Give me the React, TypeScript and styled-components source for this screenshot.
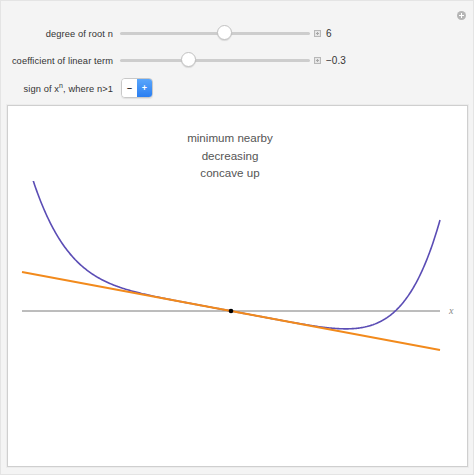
import { Fragment } from 'react';
import { createGlobalStyle, styled } from 'styled-components';

const GlobalStyle = createGlobalStyle`
  html, body {
    margin: 0;
    padding: 0;
    background: #f4f4f4;
  }
  body {
    font-family: "Liberation Sans", Arial, sans-serif;
  }
`;

const Frame = styled.div`
  position: relative;
  box-sizing: border-box;
  width: 474px;
  height: 475px;
  background: #f4f4f4;
  border: 1px solid #e4e4e4;
  padding: 19px 6px 0 6px;
`;

const AddButton = styled.div`
  position: absolute;
  top: 10px;
  right: 7px;
  width: 9px;
  height: 9px;
  border-radius: 50%;
  background: #b5b5b5;
  &::before,
  &::after {
    content: '';
    position: absolute;
    background: #fff;
  }
  &::before {
    left: 2px;
    top: 4px;
    width: 5px;
    height: 1px;
  }
  &::after {
    left: 4px;
    top: 2px;
    width: 1px;
    height: 5px;
  }
`;

const Controls = styled.div`
  display: grid;
  grid-template-columns: 106px auto;
  column-gap: 7px;
  grid-auto-rows: 27px;
  align-items: center;
  margin-bottom: 4px;
`;

const Label = styled.div`
  font-size: 9.3px;
  color: #333;
  text-align: right;
  white-space: nowrap;
  letter-spacing: 0.1px;
  sup {
    font-size: 7px;
    vertical-align: 4px;
  }
`;

const ControlCell = styled.div`
  display: flex;
  align-items: center;
`;

const Track = styled.div`
  position: relative;
  width: 190px;
  height: 3px;
  border-radius: 2px;
  background: #cdcdcd;
`;

const Thumb = styled.div`
  position: absolute;
  top: -7px;
  width: 15px;
  height: 15px;
  box-sizing: border-box;
  border-radius: 50%;
  background: #fff;
  border: 1px solid #c2c2c2;
  box-shadow: 0 1px 1px rgba(0, 0, 0, 0.12);
`;

const StepIcon = styled.div`
  position: relative;
  box-sizing: border-box;
  width: 7px;
  height: 7px;
  margin-left: 4px;
  border: 1px solid #b8b8b8;
  background: #e6e6e6;
  &::before,
  &::after {
    content: '';
    position: absolute;
    background: #a8a8a8;
  }
  &::before {
    left: 1px;
    top: 2px;
    width: 3px;
    height: 1px;
  }
  &::after {
    left: 2px;
    top: 1px;
    width: 1px;
    height: 3px;
  }
`;

const Value = styled.span`
  margin-left: 5px;
  font-size: 10px;
  color: #333;
`;

const Toggle = styled.div`
  display: flex;
  margin-left: 1px;
  height: 18px;
  border-radius: 4px;
  overflow: hidden;
  border: 1px solid #c8c8c8;
  box-shadow: 0 1px 1px rgba(0, 0, 0, 0.08);
`;

const ToggleButton = styled.div<{ $active?: boolean }>`
  width: 15px;
  display: flex;
  align-items: center;
  justify-content: center;
  font-size: 9px;
  font-weight: bold;
  color: ${(p) => (p.$active ? '#fff' : '#333')};
  background: ${(p) =>
    p.$active ? 'linear-gradient(#5aa6fb, #2a7ef1)' : '#fff'};
`;

const PlotBox = styled.div`
  box-sizing: border-box;
  width: 461px;
  height: 362px;
  background: #fff;
  border: 1px solid #cfcfcf;
  box-shadow: 0 0 0 1px #ececec;
`;

const PlotSvg = styled.svg`
  display: block;
`;

const sliders = [
  { label: 'degree of root n', value: 6, min: 1, max: 10, shown: '6' },
  { label: 'coefficient of linear term', value: -0.3, min: -1, max: 1, shown: '\u22120.3' },
];

const n = 6;
const c = -0.3;
const toPx = (x: number) => 231 + 209 * x;
const toPy = (y: number) => 311 - 130 * y;

const curvePath = () => {
  const pts: string[] = [];
  for (let i = 0; i <= 400; i++) {
    const x = -1 + (2 * i) / 400;
    const y = Math.pow(x, n) + c * x;
    pts.push(`${toPx(x).toFixed(2)},${toPy(y).toFixed(2)}`);
  }
  return 'M' + pts.join(' L');
};

const Plot = () => (
  <PlotBox>
    <PlotSvg width={459} height={360} viewBox="8 106 459 360">
      <defs>
        <clipPath id="range">
          <rect x={8} y={toPy(1.0)} width={459} height={360} />
        </clipPath>
      </defs>
      <g fontFamily="'Liberation Sans', Arial, sans-serif" fontSize={11.6} fill="#555" textAnchor="middle">
        <text x={230} y={142}>minimum nearby</text>
        <text x={230} y={159.5}>decreasing</text>
        <text x={230} y={177}>concave up</text>
      </g>
      <line x1={22} y1={311} x2={440} y2={311} stroke="#7a7a7a" strokeWidth={1} />
      <text x={449} y={314} fontFamily="'Liberation Serif', serif" fontStyle="italic" fontSize={10} fill="#888">
        x
      </text>
      <path d={curvePath()} fill="none" stroke="#5b4db5" strokeWidth={1.6} clipPath="url(#range)" />
      <line x1={toPx(-1)} y1={toPy(-c)} x2={toPx(1)} y2={toPy(c)} stroke="#f28a1c" strokeWidth={2} />
      <circle cx={231} cy={311} r={2.3} fill="#000" />
    </PlotSvg>
  </PlotBox>
);

export default function App() {
  return (
    <>
      <GlobalStyle />
      <Frame>
        <AddButton />
        <Controls>
          {sliders.map((s) => (
            <Fragment key={s.label}>
              <Label>{s.label}</Label>
              <ControlCell>
                <Track>
                  <Thumb style={{ left: ((s.value - s.min) / (s.max - s.min)) * (190 - 15) }} />
                </Track>
                <StepIcon />
                <Value>{s.shown}</Value>
              </ControlCell>
            </Fragment>
          ))}
          <Label>
            sign of x<sup>n</sup>, where n&gt;1
          </Label>
          <ControlCell>
            <Toggle>
              <ToggleButton>&ndash;</ToggleButton>
              <ToggleButton $active>+</ToggleButton>
            </Toggle>
          </ControlCell>
        </Controls>
        <Plot />
      </Frame>
    </>
  );
}
